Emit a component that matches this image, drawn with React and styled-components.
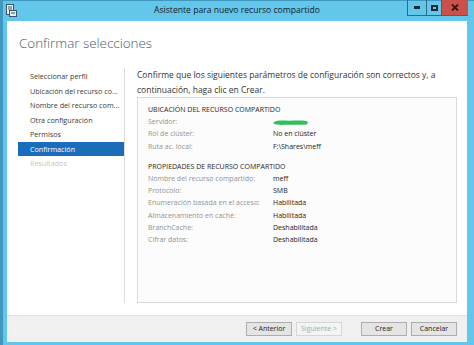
import React from 'react';
import styled, { createGlobalStyle } from 'styled-components';

const steps = [
  { label: 'Seleccionar perfil' },
  { label: 'Ubicación del recurso co...' },
  { label: 'Nombre del recurso com...' },
  { label: 'Otra configuración' },
  { label: 'Permisos' },
  { label: 'Confirmación', active: true },
  { label: 'Resultados', disabled: true },
];

const sections = [
  {
    title: 'UBICACIÓN DEL RECURSO COMPARTIDO',
    rows: [
      { label: 'Servidor:', redacted: true },
      { label: 'Rol de clúster:', value: 'No en clúster' },
      { label: 'Ruta ac. local:', value: 'F:\\Shares\\meff' },
    ],
  },
  {
    title: 'PROPIEDADES DE RECURSO COMPARTIDO',
    rows: [
      { label: 'Nombre del recurso compartido:', value: 'meff' },
      { label: 'Protocolo:', value: 'SMB' },
      { label: 'Enumeración basada en el acceso:', value: 'Habilitada' },
      { label: 'Almacenamiento en caché:', value: 'Habilitada' },
      { label: 'BranchCache:', value: 'Deshabilitada' },
      { label: 'Cifrar datos:', value: 'Deshabilitada' },
    ],
  },
];

const App = () => {
  return (
    <>
      <GlobalStyle />
      <Window>
        <TitleBar>
          <AppIcon>
            <svg width="11" height="13" viewBox="0 0 11 13">
              <rect x="0.5" y="0.5" width="7" height="10" fill="#eef6fa" stroke="#3b5566" />
              <rect x="3.5" y="6.5" width="7" height="6" fill="#dfeef5" stroke="#3b5566" />
              <line x1="2" y1="3" x2="6" y2="3" stroke="#3b5566" />
              <line x1="2" y1="5" x2="6" y2="5" stroke="#3b5566" />
              <line x1="5" y1="9" x2="9" y2="9" stroke="#3b5566" />
            </svg>
          </AppIcon>
          <Title>Asistente para nuevo recurso compartido</Title>
          <WinButtons>
            <WinButton $w={18}>
              <svg width="6" height="3"><rect width="6" height="3" fill="#1b2a33" /></svg>
            </WinButton>
            <WinButton $w={14}>
              <svg width="7" height="6"><rect x="1" y="1" width="5" height="4" fill="none" stroke="#1b2a33" strokeWidth="2" /></svg>
            </WinButton>
            <CloseButton>
              <svg width="8" height="7" viewBox="0 0 8 7">
                <path d="M1 0.5 L7 6.5 M7 0.5 L1 6.5" stroke="#3a1412" strokeWidth="1.8" />
              </svg>
            </CloseButton>
          </WinButtons>
        </TitleBar>

        <Body>
          <Heading>Confirmar selecciones</Heading>
          <Main>
            <Nav>
              {steps.map((s) => (
                <NavItem key={s.label} $active={s.active} $disabled={s.disabled}>
                  {s.label}
                </NavItem>
              ))}
            </Nav>
            <Content>
              <Description>
                Confirme que los siguientes parámetros de configuración son correctos y, a
                continuación, haga clic en Crear.
              </Description>
              <SummaryBox>
                {sections.map((sec, i) => (
                  <Section key={sec.title} $first={i === 0}>
                    <SectionTitle>{sec.title}</SectionTitle>
                    {sec.rows.map((r) => (
                      <Row key={r.label}>
                        <Label>{r.label}</Label>
                        {r.redacted ? (
                          <Value>
                            <svg width="36" height="7" viewBox="0 0 36 7">
                              <path
                                d="M1 3 C4 1.2 10 1.5 16 1.8 C22 1.6 28 1.2 33 2 C35.5 2.6 35.5 5 33 5.6 C27 6.2 20 5.6 14 5.8 C8 6 3 6 1.5 5 C0.3 4.4 0.2 3.6 1 3 Z"
                                fill="#2fbf5c"
                              />
                            </svg>
                          </Value>
                        ) : (
                          <Value>{r.value}</Value>
                        )}
                      </Row>
                    ))}
                  </Section>
                ))}
              </SummaryBox>
            </Content>
          </Main>
          <Footer>
            <ButtonGroup>
              <Button>&lt; Anterior</Button>
              <Button disabled>Siguiente &gt;</Button>
            </ButtonGroup>
            <ButtonGroup>
              <Button>Crear</Button>
              <Button>Cancelar</Button>
            </ButtonGroup>
          </Footer>
        </Body>
      </Window>
    </>
  );
};

const GlobalStyle = createGlobalStyle`
  html, body {
    margin: 0;
    padding: 0;
    background: #5ec4e9;
  }
  body {
    font-family: "Segoe UI", "Open Sans", "Noto Sans", sans-serif;
    color: #2b2b2b;
  }
`;

const Window = styled.div`
  width: 474px;
  height: 345px;
  box-sizing: border-box;
  display: flex;
  flex-direction: column;
  background: #62c7eb;
  box-shadow: inset 3px 1px 0 #3f98bd;
`;

const TitleBar = styled.div`
  height: 21px;
  display: grid;
  grid-template-columns: 1fr auto 1fr;
  align-items: start;
`;

const AppIcon = styled.div`
  padding: 4px 0 0 6px;
  display: flex;
`;

const Title = styled.div`
  font-size: 8.6px;
  line-height: 21px;
  color: #131c22;
`;

const WinButtons = styled.div`
  justify-self: end;
  display: flex;
  margin-right: 6px;
  border-left: 1px solid #2f6b85;
  border-bottom: 1px solid #2f6b85;
  height: 15px;
`;

const WinButton = styled.div`
  width: ${(p) => p.$w}px;
  height: 15px;
  border-right: 1px solid #2f6b85;
  display: flex;
  align-items: center;
  justify-content: center;
`;

const CloseButton = styled.div`
  width: 26px;
  height: 15px;
  background: #c9514a;
  display: flex;
  align-items: center;
  justify-content: center;
`;

const Body = styled.div`
  flex: 1;
  margin: 0 7px 3px 7px;
  background: #ffffff;
  display: flex;
  flex-direction: column;
`;

const Heading = styled.h1`
  margin: 0;
  padding: 12px 0 0 12px;
  font-size: 13.4px;
  line-height: 20px;
  font-weight: 300;
  color: #3f5c6c;
`;

const Main = styled.div`
  flex: 1;
  display: flex;
  margin: 15px 0 12px 0;
  padding-left: 11px;
`;

const Nav = styled.div`
  width: 107px;
  box-sizing: border-box;
  border-right: 1px solid #dcdcdc;
  padding-top: 1px;
`;

const NavItem = styled.div`
  height: 14.5px;
  line-height: 14.5px;
  padding-left: 12px;
  font-size: 7.2px;
  white-space: nowrap;
  color: ${(p) => (p.$active ? '#ffffff' : p.$disabled ? '#c6c6c6' : '#3a3a3a')};
  background: ${(p) => (p.$active ? '#1b6db9' : 'transparent')};
`;

const Content = styled.div`
  flex: 1;
  display: flex;
  flex-direction: column;
  padding: 0 10px 0 12px;
`;

const Description = styled.p`
  margin: 0;
  font-size: 8.5px;
  line-height: 14.5px;
  color: #333;
`;

const SummaryBox = styled.div`
  flex: 1;
  border: 1px solid #dadada;
  background: #fcfcfc;
  padding: 6px 10px;
`;

const Section = styled.div`
  margin-top: ${(p) => (p.$first ? 0 : 8)}px;
`;

const SectionTitle = styled.div`
  font-size: 7px;
  line-height: 12.2px;
  color: #262626;
`;

const Row = styled.div`
  display: grid;
  grid-template-columns: 127px 1fr;
  font-size: 7px;
  line-height: 12.2px;
  height: 12.2px;
`;

const Label = styled.span`
  color: #939393;
`;

const Value = styled.span`
  color: #222;
  display: flex;
  align-items: center;
  margin-left: -2px;
`;

const Footer = styled.div`
  height: 27px;
  box-sizing: border-box;
  background: #f0f0f0;
  border-top: 1px solid #e2e2e2;
  display: flex;
  justify-content: flex-end;
  align-items: flex-start;
  gap: 19px;
  padding: 6px 10px 0 0;
`;

const ButtonGroup = styled.div`
  display: flex;
  gap: 4px;
`;

const Button = styled.button`
  width: 46px;
  height: 14px;
  padding: 0;
  font-family: inherit;
  font-size: 7px;
  line-height: 12px;
  color: #222;
  background: #e4e4e4;
  border: 1px solid #adadad;
  border-radius: 0;

  &:disabled {
    color: #a9a9a9;
    background: #f4f4f4;
    border-color: #d6d6d6;
  }
`;

export default App;
